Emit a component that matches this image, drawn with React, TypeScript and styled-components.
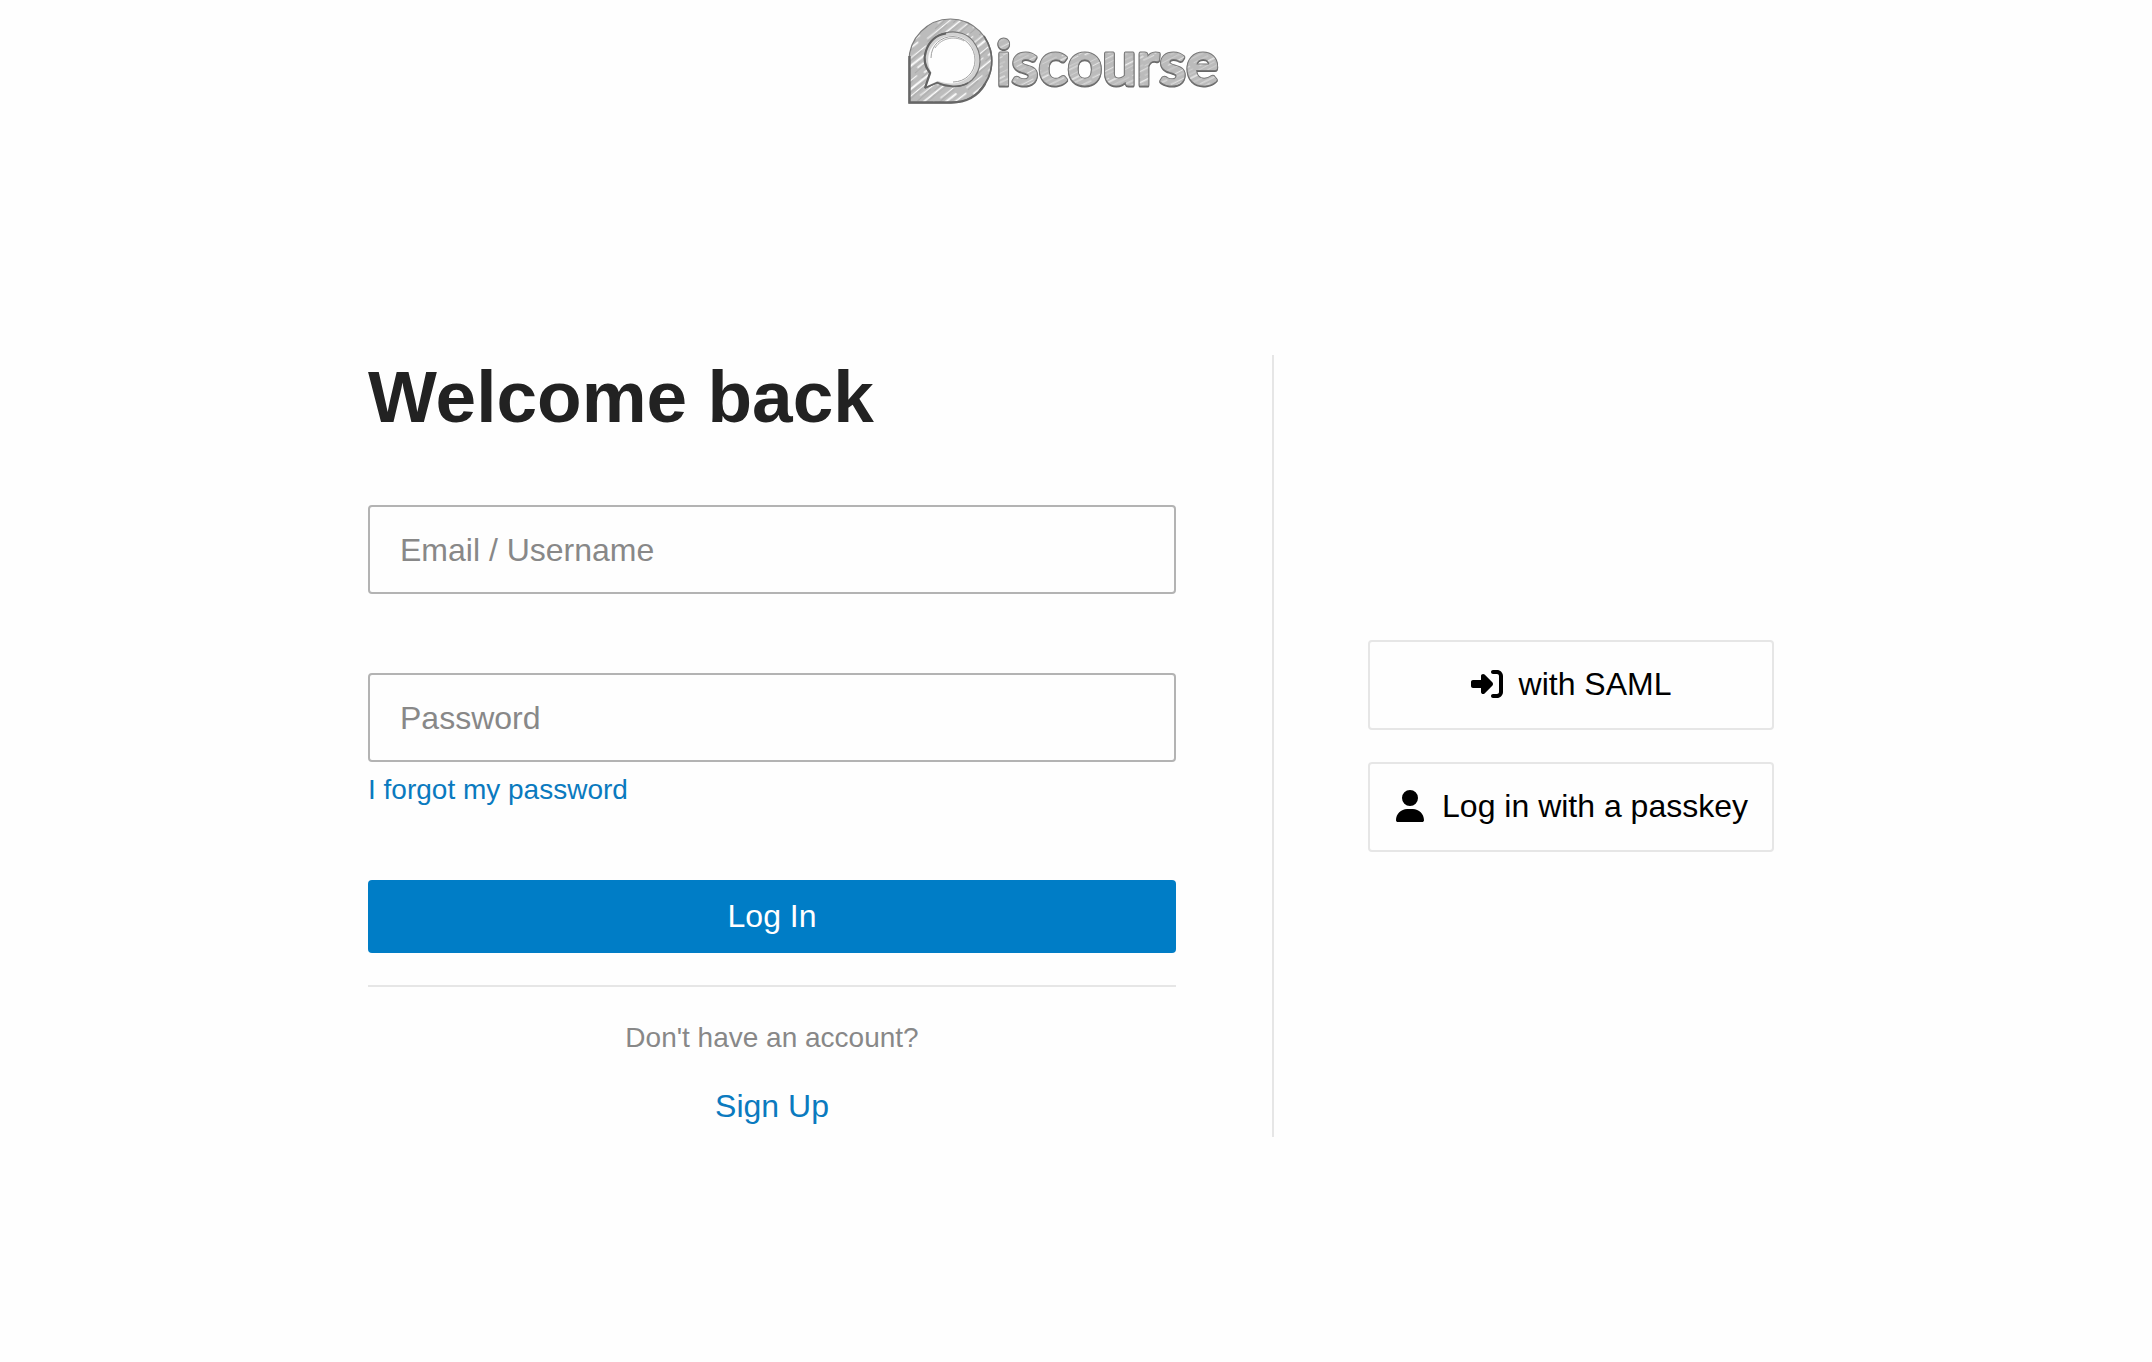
import React from "react";
import styled, { createGlobalStyle } from "styled-components";
import { FaRightToBracket, FaUser } from "react-icons/fa6";

const color = {
  primary: "#222222",
  muted: "#888888",
  border: "#b3b3b3",
  hairline: "#e6e6e6",
  accent: "#007dc6",
  link: "#0a7abf",
};

const GlobalStyle = createGlobalStyle`
  *, *::before, *::after { box-sizing: border-box; }
  body {
    margin: 0;
    background: #fefefe;
    color: ${color.primary};
    font-family: Arial, "Liberation Sans", sans-serif;
    font-size: 32px;
    line-height: 38px;
  }
  input, button { font: inherit; }
`;

const Page = styled.div`
  padding: 16px 26px 16px 16px;
`;

const Header = styled.header`
  display: flex;
  justify-content: center;
  margin-bottom: 249px;
`;

const LogoLink = styled.a`
  display: block;
  height: 90px;
`;

const Login = styled.main`
  display: grid;
  grid-template-columns: minmax(0, 1fr) auto;
  max-width: 1406px;
  margin: 0 auto;
`;

const FormColumn = styled.form`
  display: flex;
  flex-direction: column;
  padding: 0 96px 12px 0;
  border-right: 2px solid ${color.hairline};
`;

const Title = styled.h1`
  margin: 0 0 66px;
  font-size: 73px;
  line-height: 84px;
  font-weight: 700;
`;

const Field = styled.div<{ $gap: number }>`
  display: flex;
  flex-direction: column;
  align-items: flex-start;
  gap: 11px;
  margin-bottom: ${(p) => p.$gap}px;
`;

const TextInput = styled.input`
  width: 100%;
  height: 89px;
  padding: 2px 30px 0;
  border: 2px solid ${color.border};
  border-radius: 4px;
  background: #fefefe;
  color: ${color.primary};
  &::placeholder {
    color: ${color.muted};
    opacity: 1;
  }
`;

const TextLink = styled.a<{ $small?: boolean }>`
  color: ${color.link};
  text-decoration: none;
  font-size: ${(p) => (p.$small ? 28 : 32)}px;
  line-height: ${(p) => (p.$small ? 34 : 38)}px;
`;

const SubmitButton = styled.button`
  height: 73px;
  padding: 0 24px 2px;
  border: 0;
  border-radius: 4px;
  background: ${color.accent};
  color: #ffffff;
  cursor: pointer;
`;

const SignUp = styled.div`
  display: flex;
  flex-direction: column;
  align-items: center;
  gap: 32px;
  margin-top: 32px;
  padding-top: 34px;
  border-top: 2px solid ${color.hairline};
`;

const Hint = styled.span`
  color: ${color.muted};
  font-size: 28px;
  line-height: 34px;
`;

const ProviderColumn = styled.div`
  display: flex;
  flex-direction: column;
  justify-content: center;
  gap: 32px;
  padding-left: 94px;
`;

const ProviderButton = styled.button`
  display: flex;
  align-items: center;
  justify-content: center;
  gap: 16px;
  height: 90px;
  padding: 0 24px 2px;
  border: 2px solid ${color.hairline};
  border-radius: 4px;
  background: #fefefe;
  color: #000000;
  white-space: nowrap;
  cursor: pointer;
`;

/* Pencil strokes of the logo: start x, y, length, weight. */
const strokes = [
  [2, 3, 34, 2], [44, 2, 22, 1], [74, 5, 20, 2],
  [12, 8, 26, 1], [50, 9, 30, 3], [0, 14, 22, 2],
  [30, 14, 40, 1], [78, 15, 16, 2], [8, 19, 36, 3],
  [56, 20, 18, 1], [76, 23, 18, 1], [20, 26, 28, 1],
  [54, 27, 34, 2], [2, 31, 30, 1], [38, 33, 24, 2],
  [70, 35, 22, 1], [10, 38, 40, 2], [58, 41, 26, 3],
  [0, 44, 20, 1], [28, 45, 34, 1], [72, 47, 20, 2],
];

function Logo() {
  return (
    <svg width="330" height="90" viewBox="0 0 330 90" role="img" aria-label="Discourse">
      <defs>
        <pattern id="pencil" width="96" height="50" patternUnits="userSpaceOnUse" patternTransform="rotate(-40)">
          <rect width="96" height="50" fill="#bcbcbc" />
          {strokes.map(([x, y, len]) => (
            <path key={`s${x}-${y}`} d={`M${x - 6} ${y + 2.5}l${len} -0.6`} stroke="#a4a4a4" strokeWidth="0.8" />
          ))}
          {strokes.map(([x, y, len, w]) => (
            <path key={`${x}-${y}`} d={`M${x} ${y}l${len} 0.8`} stroke="#fff" strokeWidth={0.6 + w * 0.5} strokeLinecap="round" />
          ))}
        </pattern>
        <pattern id="pencil-fine" width="96" height="50" patternUnits="userSpaceOnUse" patternTransform="rotate(-28) scale(0.7)">
          <rect width="96" height="50" fill="#bbbbbb" />
          {strokes.map(([x, y, len, w]) => (
            <path key={`${x}-${y}`} d={`M${x} ${y}l${len} 0.8`} stroke="#fff" strokeWidth={w * 0.6} strokeLinecap="round" opacity="0.75" />
          ))}
        </pattern>
      </defs>
      <path d="M3 87V45A41.500 42 0 1 1 45 87Z" fill="url(#pencil)" stroke="#7c7c7c" strokeWidth="1.2" />
      <path d="M3.500 40V86.500H45C60 86.500 72 80 79 68" fill="none" stroke="#666" strokeWidth="2.4" />
      <path d="M78 20C90 38 88 60 73 75" fill="none" stroke="#666" strokeWidth="1.6" />
      <path d="M19 72L24 57C18 50 17 40 21 32C30 13 56 11 67 25C77 38 76 54 66 64C56 73 42 72 31 67Z" fill="#d2d2d2" stroke="#777" strokeWidth="1.2" strokeLinejoin="round" />
      <path d="M20.500 70L25.500 57C21 49 21 38 26 31C35 17 55 16 64 28C73 40 71 56 60 63C51 69 41 68 32 65Z" fill="#fefefe" />
      <path d="M19 72L24 57C18.500 50 17.500 42 20 35C23 26 30 19 40 17.500" fill="none" stroke="#626262" strokeWidth="2.2" />
      <path d="M25 42C25 29 35 20.500 47 20.500C60 21 69 32 69 44C69 57 59 66 47 66" fill="none" stroke="#a0a0a0" strokeWidth="1" />
      <path d="M29 32C36 21 50 20 58 25" fill="none" stroke="#999" strokeWidth="0.8" />
      <path d="M19 72L31 66.500C41 71 53 72 62 67" fill="none" stroke="#666" strokeWidth="1.5" />
      <g fontFamily="Lato, sans-serif" fontWeight="700" fontSize="61" strokeLinejoin="round">
        <text x="90" y="70" fill="#666" stroke="#666" strokeWidth="3" aria-hidden="true">iscourse</text>
        <text x="90" y="69" fill="#777" stroke="#777" strokeWidth="3" aria-hidden="true">iscourse</text>
        <text x="90" y="69" fill="url(#pencil-fine)" stroke="url(#pencil-fine)" strokeWidth="1">iscourse</text>
      </g>
    </svg>
  );
}

export default function App() {
  return (
    <>
      <GlobalStyle />
      <Page>
        <Header>
          <LogoLink href="#home">
            <Logo />
          </LogoLink>
        </Header>
        <Login>
          <FormColumn onSubmit={(e) => e.preventDefault()}>
            <Title>Welcome back</Title>
            <Field $gap={79}>
              <TextInput id="account" type="text" placeholder="Email / Username" aria-label="Email / Username" autoComplete="username" />
            </Field>
            <Field $gap={73}>
              <TextInput id="password" type="password" placeholder="Password" aria-label="Password" autoComplete="current-password" />
              <TextLink href="#forgot" $small>I forgot my password</TextLink>
            </Field>
            <SubmitButton type="submit">Log In</SubmitButton>
            <SignUp>
              <Hint>Don't have an account?</Hint>
              <TextLink href="#signup">Sign Up</TextLink>
            </SignUp>
          </FormColumn>
          <ProviderColumn>
            <ProviderButton type="button">
              <FaRightToBracket size={32} aria-hidden="true" />
              with SAML
            </ProviderButton>
            <ProviderButton type="button">
              <FaUser size={32} aria-hidden="true" />
              Log in with a passkey
            </ProviderButton>
          </ProviderColumn>
        </Login>
      </Page>
    </>
  );
}
